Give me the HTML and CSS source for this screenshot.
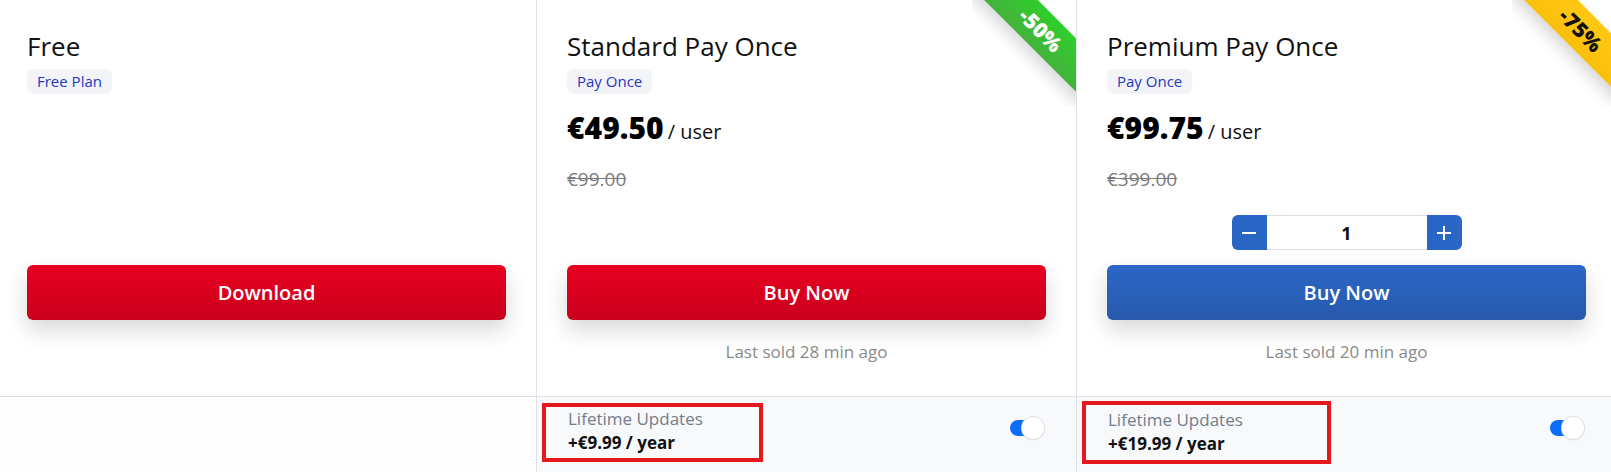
FILE: index.html
```html
<!DOCTYPE html>
<html lang="en">
<head>
<meta charset="utf-8">
<title>Pricing</title>
<link rel="stylesheet" href="styles.css">
</head>
<body>
<div class="plans">
  <div class="plan plan--first">
    <div class="plan-body">
      <div class="plan-head">
        <h3 class="plan-title">Free</h3>
        <span class="tag">Free Plan</span>
      </div>
      <button class="btn btn--red">Download</button>
    </div>
    <div class="plan-foot plan-foot--blank"></div>
  </div>

  <div class="plan">
    <div class="ribbon-wrap"><div class="ribbon ribbon--green">-50%</div></div>
    <div class="plan-body">
      <div class="plan-head">
        <h3 class="plan-title">Standard Pay Once</h3>
        <span class="tag">Pay Once</span>
        <div class="price"><span class="price-amount">€49.50</span> <span class="price-unit">/ user</span></div>
        <div class="price-old">€99.00</div>
      </div>
      <button class="btn btn--red">Buy Now</button>
      <div class="last-sold">Last sold 28 min ago</div>
    </div>
    <div class="plan-foot">
      <div class="addon addon--a">
        <div class="addon-label">Lifetime Updates</div>
        <div class="addon-price">+€9.99 / year</div>
      </div>
      <span class="toggle"><span class="toggle-knob"></span></span>
    </div>
  </div>

  <div class="plan">
    <div class="ribbon-wrap"><div class="ribbon ribbon--yellow">-75%</div></div>
    <div class="plan-body">
      <div class="plan-head">
        <h3 class="plan-title">Premium Pay Once</h3>
        <span class="tag">Pay Once</span>
        <div class="price"><span class="price-amount">€99.75</span> <span class="price-unit">/ user</span></div>
        <div class="price-old">€399.00</div>
        <div class="stepper">
          <button class="stepper-btn" aria-label="decrease">
            <svg width="16" height="16" viewBox="0 0 16 16"><path d="M1 8h14" stroke="#fff" stroke-width="2"/></svg>
          </button>
          <input class="stepper-input" type="text" value="1">
          <button class="stepper-btn" aria-label="increase">
            <svg width="16" height="16" viewBox="0 0 16 16"><path d="M1 8h14M8 1v14" stroke="#fff" stroke-width="2"/></svg>
          </button>
        </div>
      </div>
      <button class="btn btn--blue">Buy Now</button>
      <div class="last-sold">Last sold 20 min ago</div>
    </div>
    <div class="plan-foot">
      <div class="addon addon--b">
        <div class="addon-label">Lifetime Updates</div>
        <div class="addon-price">+€19.99 / year</div>
      </div>
      <span class="toggle"><span class="toggle-knob"></span></span>
    </div>
  </div>
</div>
</body>
</html>
```

FILE: styles.css
```css
* { box-sizing: border-box; }

html, body {
  margin: 0;
  padding: 0;
  background: #fff;
  overflow: hidden;
}

body {
  font-family: "Open Sans", "Noto Sans", "Liberation Sans", sans-serif;
  color: #111;
  width: 1611px;
  height: 472px;
}

.plans {
  display: grid;
  grid-template-columns: 536px 540px 540px;
  width: 1616px;
  height: 472px;
}

.plan {
  position: relative;
  display: flex;
  flex-direction: column;
  border-left: 1px solid #dfe1e8;
}

.plan--first {
  border-left: none;
}

.plan-body {
  height: 396px;
  padding: 29px 30px 0 30px;
  display: flex;
  flex-direction: column;
}

.plan--first .plan-body {
  padding-left: 27px;
}

.plan-head {
  height: 236px;
  display: flex;
  flex-direction: column;
  align-items: flex-start;
}

.plan-title {
  margin: 0;
  font-size: 26px;
  line-height: 34px;
  font-weight: 400;
  color: #111;
}

.tag {
  margin-top: 6px;
  display: inline-block;
  padding: 3px 10px;
  font-size: 15px;
  line-height: 19px;
  color: #2436c2;
  background: #f2f4f7;
  border-radius: 7px;
}

.price {
  margin-top: 14px;
  line-height: 40px;
  white-space: nowrap;
}

.price-amount {
  font-size: 30px;
  font-weight: 800;
  color: #000;
}

.price-unit {
  font-size: 20px;
  color: #111;
}

.price-old {
  margin-top: 13px;
  font-size: 19px;
  line-height: 26px;
  color: #7a7a7a;
  text-decoration: line-through;
}

.stepper {
  margin-top: 23px;
  align-self: center;
  display: flex;
  height: 35px;
  width: 230px;
}

.stepper-btn {
  width: 35px;
  height: 35px;
  border: none;
  padding: 0;
  background: #2a66c6;
  display: flex;
  align-items: center;
  justify-content: center;
}

.stepper-btn:first-child { border-radius: 6px 0 0 6px; }
.stepper-btn:last-child { border-radius: 0 6px 6px 0; }

.stepper-input {
  flex: 1;
  min-width: 0;
  height: 35px;
  border: 1px solid #dcdde3;
  border-left: none;
  border-right: none;
  text-align: center;
  font-family: inherit;
  font-size: 18px;
  font-weight: 700;
  color: #111;
  padding: 0;
}

.btn {
  display: block;
  width: 479px;
  height: 55px;
  border: none;
  border-radius: 6px;
  color: #fff;
  font-family: inherit;
  font-size: 20px;
  font-weight: 600;
  box-shadow: 0 10px 22px rgba(0, 0, 0, 0.16);
}

.btn--red {
  background: linear-gradient(#e8001f, #c9001d);
}

.btn--blue {
  background: linear-gradient(#2b67c8, #2659ab);
}

.last-sold {
  margin-top: 20px;
  text-align: center;
  font-size: 17px;
  line-height: 24px;
  color: #8a8a8a;
}

.plan-foot {
  flex: 1;
  border-top: 1px solid #dfe1e8;
  background: #f8f9fb;
  display: flex;
  align-items: flex-start;
  justify-content: space-between;
  padding: 0 32px 0 5px;
}

.plan-foot--blank {
  background: #fdfdfd;
}

.addon {
  border: 4px solid #e4181f;
  padding-left: 22px;
}

.addon--a {
  width: 221px;
  margin-top: 6px;
  padding-top: 0;
  padding-bottom: 3px;
}

.addon--b {
  width: 249px;
  margin-top: 4px;
  padding-top: 3px;
  padding-bottom: 4px;
}

.addon-label {
  font-size: 17px;
  line-height: 24px;
  color: #747c8c;
}

.addon-price {
  font-size: 17px;
  line-height: 24px;
  font-weight: 700;
  color: #111;
}

.toggle {
  position: relative;
  display: block;
  width: 34px;
  height: 22px;
  margin-top: 20px;
}

.toggle::before {
  content: "";
  position: absolute;
  left: 0;
  top: 3px;
  width: 30px;
  height: 16px;
  border-radius: 8px;
  background: #0d6efd;
}

.toggle-knob {
  position: absolute;
  right: 0;
  top: 0;
  width: 22px;
  height: 22px;
  border-radius: 50%;
  background: #fff;
  box-shadow: 0 0 0 1px #dde0e6, 0 1px 2px rgba(0,0,0,0.1);
}

.ribbon-wrap {
  position: absolute;
  top: 0;
  right: 0;
  width: 104px;
  height: 106px;
  overflow: hidden;
  z-index: 2;
}

.ribbon {
  position: absolute;
  left: -11px;
  top: 11px;
  width: 160px;
  height: 38px;
  transform: rotate(45deg);
  text-align: center;
  font-size: 21px;
  font-weight: 800;
  line-height: 38px;
  box-shadow: 0 8px 14px rgba(0, 0, 0, 0.14);
}

.ribbon--green {
  background: linear-gradient(#2fcf2c, #45b13d);
  color: #fff;
}

.ribbon--yellow {
  background: linear-gradient(#ffc814, #fbbf0a);
  color: #111;
}
```
